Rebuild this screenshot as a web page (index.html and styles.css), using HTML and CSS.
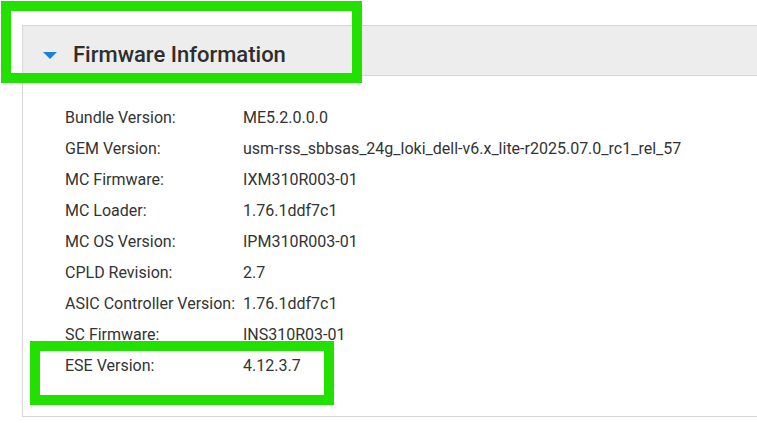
FILE: index.html
```html
<!DOCTYPE html>
<html>

<head>
  <meta charset="utf-8" />
  <title>Firmware Information</title>
  <link rel="stylesheet" href="styles.css">
</head>

<body>
  <div class="panel">
    <div class="panel-header">
      <span class="caret"></span>
      <span class="panel-title">Firmware Information</span>
    </div>
    <div class="panel-body">
      <div class="info-row"><span class="info-label">Bundle Version:</span><span class="info-value">ME5.2.0.0.0</span></div>
      <div class="info-row"><span class="info-label">GEM Version:</span><span class="info-value">usm-rss_sbbsas_24g_loki_dell-v6.x_lite-r2025.07.0_rc1_rel_57</span></div>
      <div class="info-row"><span class="info-label">MC Firmware:</span><span class="info-value">IXM310R003-01</span></div>
      <div class="info-row"><span class="info-label">MC Loader:</span><span class="info-value">1.76.1ddf7c1</span></div>
      <div class="info-row"><span class="info-label">MC OS Version:</span><span class="info-value">IPM310R003-01</span></div>
      <div class="info-row"><span class="info-label">CPLD Revision:</span><span class="info-value">2.7</span></div>
      <div class="info-row"><span class="info-label">ASIC Controller Version:</span><span class="info-value">1.76.1ddf7c1</span></div>
      <div class="info-row"><span class="info-label">SC Firmware:</span><span class="info-value">INS310R03-01</span></div>
      <div class="info-row"><span class="info-label">ESE Version:</span><span class="info-value">4.12.3.7</span></div>
    </div>
  </div>
  <div class="mark mark-title"></div>
  <div class="mark mark-ese"></div>
</body>

</html>
```

FILE: styles.css
```css
body {
  padding: 25px 0 0 22px;
  margin: 0;
  background-color: #ffffff;
  font-family: Roboto, "Liberation Sans", sans-serif;
  color: #333333;
  overflow: hidden;
  position: relative;
  height: 423px;
  box-sizing: border-box;
}

.panel {
  border: 1px solid #d6d6d6;
  margin-right: -4px;
}

.panel-header {
  display: flex;
  align-items: center;
  box-sizing: border-box;
  height: 50px;
  padding-top: 8px;
  padding-left: 20px;
  background-color: #ededed;
  border-bottom: 1px solid #d6d6d6;
}

.caret {
  width: 0;
  height: 0;
  border-left: 7px solid transparent;
  border-right: 7px solid transparent;
  border-top: 7px solid #1a7fd6;
  margin-top: 2px;
  margin-right: 16px;
}

.panel-title {
  font-size: 22px;
  font-weight: 500;
  color: #2e2e2e;
}

.panel-body {
  padding: 26px 0 35px 42px;
}

.info-row {
  display: flex;
  height: 31px;
  align-items: center;
  font-size: 16px;
  white-space: nowrap;
}

.info-label {
  width: 178px;
  flex-shrink: 0;
}

.mark {
  position: absolute;
  border: 10px solid #22e000;
  box-sizing: border-box;
}

.mark-title {
  left: 1px;
  top: 1px;
  width: 361px;
  height: 82px;
}

.mark-ese {
  left: 30px;
  top: 341px;
  width: 304px;
  height: 64px;
}
```
